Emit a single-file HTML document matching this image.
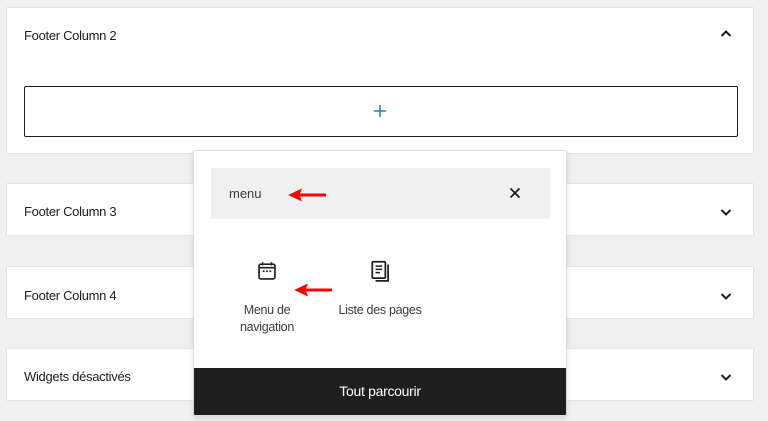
<!DOCTYPE html>
<html><head><style>
*{margin:0;padding:0;box-sizing:border-box}
body{width:768px;height:421px;background:#f0f0f0;font-family:"Liberation Sans",sans-serif;color:#1e1e1e;position:relative;overflow:hidden}
.p{position:absolute;left:6px;width:748px;background:#fff;border:1px solid #e4e4e4}
.t{position:absolute;left:17px;font-size:13px;letter-spacing:-0.3px}
.ch{position:absolute;left:712px}
.ab{position:absolute;left:17px;top:78px;width:714px;height:51px;border:1px solid #1e1e1e;border-radius:2px}
.pop{position:absolute;left:193px;top:150px;width:374px;height:266px;background:#fff;border:1px solid #ddd;border-radius:2px;box-shadow:0 2px 6px rgba(0,0,0,.12);overflow:hidden}
.sr{position:absolute;left:17px;top:17px;width:339px;height:51px;background:#f0f0f0;border-radius:2px}
.ft{position:absolute;left:0;bottom:0;width:100%;height:47px;background:#1e1e1e;color:#fff;font-size:14px;text-align:center;line-height:47px;letter-spacing:-0.3px}
.lb{position:absolute;font-size:12.5px;color:#3c3c3c;text-align:center;line-height:17px;letter-spacing:-0.3px}
</style></head><body>
<div class="p" style="top:7px;height:147px">
<div class="t" style="top:20px">Footer Column 2</div>
<svg class="ch" style="top:19px" width="14" height="14" viewBox="0 0 14 14"><path d="M2.5 9 L7 4.5 L11.5 9" fill="none" stroke="#1e1e1e" stroke-width="2"/></svg>
<div class="ab"><svg style="position:absolute;left:348px;top:17px" width="14" height="14" viewBox="0 0 14 14"><path d="M7 1V13M1 7H13" stroke="#2a7fc4" stroke-width="1.6"/></svg></div>
</div>
<div class="p" style="top:183px;height:53px"><div class="t" style="top:20px">Footer Column 3</div>
<svg class="ch" style="top:21px" width="14" height="14" viewBox="0 0 14 14"><path d="M2.5 5 L7 9.5 L11.5 5" fill="none" stroke="#1e1e1e" stroke-width="2"/></svg></div>
<div class="p" style="top:266px;height:53px"><div class="t" style="top:21px">Footer Column 4</div>
<svg class="ch" style="top:22px" width="14" height="14" viewBox="0 0 14 14"><path d="M2.5 5 L7 9.5 L11.5 5" fill="none" stroke="#1e1e1e" stroke-width="2"/></svg></div>
<div class="p" style="top:348px;height:53px"><div class="t" style="top:20px">Widgets désactivés</div>
<svg class="ch" style="top:21px" width="14" height="14" viewBox="0 0 14 14"><path d="M2.5 5 L7 9.5 L11.5 5" fill="none" stroke="#1e1e1e" stroke-width="2"/></svg></div>

<div class="pop">
<div class="sr">
<div style="position:absolute;left:18px;top:18px;font-size:13px;color:#3c3c3c">menu</div>
<svg style="position:absolute;left:77px;top:20px" width="38" height="14" viewBox="0 0 38 14"><path d="M0 7 L14 0.5 L12 5.5 H38 V8.5 H12 L14 13.5 Z" fill="#f00"/></svg>
<svg style="position:absolute;left:298px;top:19px" width="12" height="12" viewBox="0 0 12 12"><path d="M1.5 1.5L10.5 10.5M10.5 1.5L1.5 10.5" stroke="#1e1e1e" stroke-width="1.8"/></svg>
</div>
<svg style="position:absolute;left:62px;top:109px" width="22" height="22" viewBox="0 0 20 20"><rect x="2.8" y="3.8" width="14.4" height="13.4" rx="1.5" fill="none" stroke="#1e1e1e" stroke-width="1.5"/><path d="M3 7H17" stroke="#1e1e1e" stroke-width="1.5"/><path d="M6 2v3M14 2v3" stroke="#1e1e1e" stroke-width="1.3"/><circle cx="7" cy="10.2" r="0.9" fill="#1e1e1e"/><circle cx="10" cy="10.2" r="0.9" fill="#1e1e1e"/><circle cx="13" cy="10.2" r="0.9" fill="#1e1e1e"/></svg>
<svg style="position:absolute;left:100px;top:132px" width="38" height="14" viewBox="0 0 38 14"><path d="M0 7 L14 0.5 L12 5.5 H38 V8.5 H12 L14 13.5 Z" fill="#f00"/></svg>
<svg style="position:absolute;left:175px;top:108px" width="24" height="24" viewBox="0 0 22 22"><rect x="3" y="2.5" width="12" height="15" rx="1" fill="none" stroke="#1e1e1e" stroke-width="1.6"/><path d="M6 6.5H12M6 9.5H12M6 12.5H10" stroke="#1e1e1e" stroke-width="1.4"/><path d="M17.5 5V20H6" fill="none" stroke="#1e1e1e" stroke-width="1.6"/></svg>
<div class="lb" style="left:30px;top:151px;width:86px">Menu de<br>navigation</div>
<div class="lb" style="left:134px;top:151px;width:104px">Liste des pages</div>
<div class="ft">Tout parcourir</div>
</div>
</body></html>
